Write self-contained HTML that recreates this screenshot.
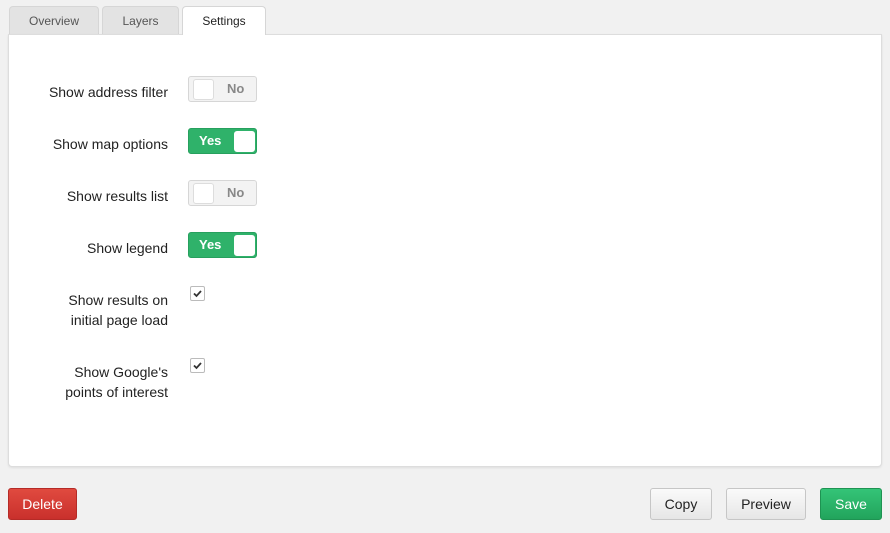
<!DOCTYPE html>
<html><head><style>
body{margin:0;width:890px;height:533px;background:#f1f1f1;font-family:"Liberation Sans",sans-serif;position:relative;overflow:hidden;color:#222}
.tab{position:absolute;top:6px;height:28px;background:#e3e3e3;border:1px solid #d6d6d6;border-bottom:none;border-radius:4px 4px 0 0;font-size:12px;color:#555;text-align:center;line-height:28px;box-sizing:border-box}
.panel{position:absolute;left:8px;top:34px;width:874px;height:433px;background:#fff;border:1px solid #ddd;border-radius:0 0 4px 4px;box-sizing:border-box;box-shadow:0 1px 2px rgba(0,0,0,.08)}
.lbl{position:absolute;right:722px;font-size:14px;text-align:right;line-height:20px;color:#222}
.tg{position:absolute;left:188px;width:69px;height:26px;border-radius:3px;box-sizing:border-box;font-size:13px;font-weight:bold;line-height:24px}
.off{background:#f3f3f3;border:1px solid #d6d6d6;color:#888}
.on{background:#2fb26a;border:1px solid #27a05e;color:#fff}
.knob{position:absolute;top:2px;width:19px;height:19px;background:#fff;border:1px solid #ddd;border-radius:3px}
.cb{position:absolute;left:190px;width:13px;height:13px;border:1px solid #bbb;border-radius:2px;background:#fff}
.btn{position:absolute;top:488px;height:32px;border-radius:3px;box-sizing:border-box;font-size:14px;text-align:center;line-height:30px}
.g{background:linear-gradient(#fafafa,#e6e6e6);border:1px solid #c6c6c6;color:#222}
</style></head><body>
<div class="tab" style="left:9px;width:90px">Overview</div>
<div class="tab" style="left:102px;width:77px">Layers</div>
<div class="tab" style="left:182px;width:84px;background:#fff;color:#222;height:29px;z-index:2">Settings</div>
<div class="panel"></div>

<div class="lbl" style="top:82px">Show address filter</div>
<div class="tg off" style="top:76px"><div class="knob" style="left:4px"></div><span style="position:absolute;left:38px">No</span></div>

<div class="lbl" style="top:134px">Show map options</div>
<div class="tg on" style="top:128px"><span style="position:absolute;left:10px">Yes</span><div class="knob" style="left:45px;border-color:#fff"></div></div>

<div class="lbl" style="top:186px">Show results list</div>
<div class="tg off" style="top:180px"><div class="knob" style="left:4px"></div><span style="position:absolute;left:38px">No</span></div>

<div class="lbl" style="top:238px">Show legend</div>
<div class="tg on" style="top:232px"><span style="position:absolute;left:10px">Yes</span><div class="knob" style="left:45px;border-color:#fff"></div></div>

<div class="lbl" style="top:290px">Show results on<br>initial page load</div>
<div class="cb" style="top:286px"><svg width="13" height="13" viewBox="0 0 13 13"><path d="M3 6.5L5.5 9L10 4" stroke="#333" stroke-width="1.8" fill="none"/></svg></div>

<div class="lbl" style="top:362px">Show Google's<br>points of interest</div>
<div class="cb" style="top:358px"><svg width="13" height="13" viewBox="0 0 13 13"><path d="M3 6.5L5.5 9L10 4" stroke="#333" stroke-width="1.8" fill="none"/></svg></div>

<div class="btn" style="left:8px;width:69px;background:linear-gradient(#e04a3f,#c9302c);border:1px solid #b52b27;color:#fff">Delete</div>
<div class="btn g" style="left:650px;width:62px">Copy</div>
<div class="btn g" style="left:726px;width:80px">Preview</div>
<div class="btn" style="left:820px;width:62px;background:linear-gradient(#34c477,#22a45c);border:1px solid #1e9352;color:#fff">Save</div>
</body></html>
